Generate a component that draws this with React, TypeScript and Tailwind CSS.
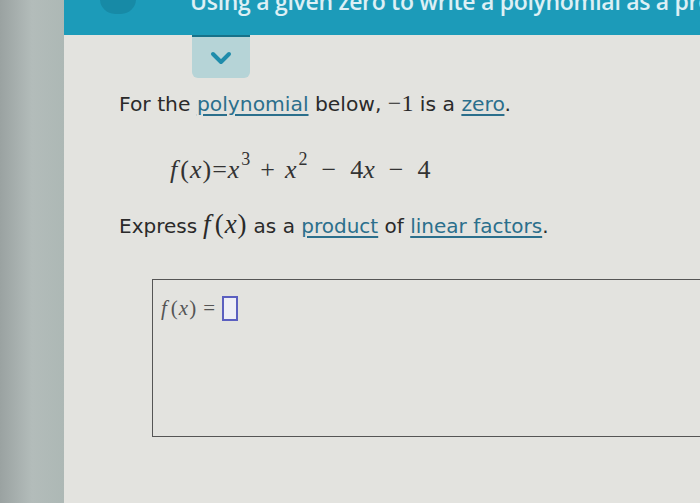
import { ChevronDown } from "lucide-react";

// Question card: header bar, collapse tab, prompt and answer box.
const serif = "font-['Liberation_Serif',serif]";

function Link({ children }: { children: React.ReactNode }) {
  return <span className="text-[#2b6f8c] underline decoration-[1.5px] underline-offset-[3px]">{children}</span>;
}

// f(x) written with a little air between the italic letters and the parens
function Fx({ gap = "ml-[2px]" }: { gap?: string }) {
  return (
    <span className="inline-flex items-baseline">
      <span className="italic">f</span>
      <span className={gap}>(</span>
      <span className="ml-[1px] italic">x</span>
      <span className="ml-[1px]">)</span>
    </span>
  );
}

export default function App() {
  return (
    <div className="flex h-[503px] w-[700px] overflow-hidden bg-[#e3e3df] font-['DejaVu_Sans',sans-serif] text-[#2a2a2a]">
      {/* left bezel strip */}
      <div className="h-full w-[64px] shrink-0 bg-gradient-to-r from-[#9aa2a1] via-[#b3bcba] to-[#adb8b5]" />

      <div className="flex min-w-0 flex-1 flex-col">
        {/* header */}
        <div className="relative h-[35px] shrink-0 overflow-hidden bg-[#1c9bb9]">
          <div className="absolute -top-[16px] left-[36px] h-[30px] w-[36px] rounded-full bg-[#178aa6]" />
          <div className="-mt-[16px] whitespace-nowrap pl-[126px] font-['Open_Sans',sans-serif] text-[23px] font-semibold tracking-[-0.3px] text-white/85">
            Using a given zero to write a polynomial as a product of linear factors
          </div>
        </div>

        {/* collapse tab */}
        <div className="ml-[128px] flex h-[43px] w-[58px] items-center justify-center rounded-b-[6px] border-t-2 border-[#16728a] bg-[#b6d4d7]">
          <ChevronDown className="h-8 w-8 text-[#1f8cab]" strokeWidth={3} />
        </div>

        <div className="pl-[55px] pt-[12px]">
          <p className="text-[20.3px] leading-[26px]">
            For the <Link>polynomial</Link> below, <span className={`${serif} text-[24px]`}>−1</span> is a <Link>zero</Link>.
          </p>

          <div className={`${serif} mt-[37px] ml-[51px] flex items-baseline text-[26px] leading-[32px] text-[#333]`}>
            <Fx gap="ml-[3px]" />
            <span className="ml-[1px]">=</span>
            <span className="ml-[1px] italic">x</span>
            <span className="ml-[2px] inline-block -translate-y-[13px] text-[18px] leading-none">3</span>
            <span className="ml-[10px]">+</span>
            <span className="ml-[10px] italic">x</span>
            <span className="ml-[2px] inline-block -translate-y-[13px] text-[18px] leading-none">2</span>
            <span className="ml-[14px]">−</span>
            <span className="ml-[14px]">4</span>
            <span className="italic">x</span>
            <span className="ml-[14px]">−</span>
            <span className="ml-[14px]">4</span>
          </div>

          <p className="mt-[24px] flex items-baseline text-[20px] leading-[28px]">
            <span>Express</span>
            <span className={`${serif} ml-[6px] text-[27px]`}>
              <Fx gap="ml-[4px]" />
            </span>
            <span className="ml-[7px]">as a&nbsp;</span>
            <Link>product</Link>
            <span>&nbsp;of&nbsp;</span>
            <Link>linear factors</Link>
            <span>.</span>
          </p>

          {/* answer box */}
          <div className="mt-[39px] ml-[33px] h-[158px] border-[1.5px] border-r-0 border-[#555] px-[8px] pt-[13px]">
            <div className={`${serif} flex items-center gap-[7px] text-[21px] text-[#555]`}>
              <Fx gap="ml-[4px]" />
              <span>=</span>
              <span className="inline-block h-[25px] w-[16px] border-[2px] border-[#5b5fc0] bg-[#eeeef6]" />
            </div>
          </div>
        </div>
      </div>
    </div>
  );
}
